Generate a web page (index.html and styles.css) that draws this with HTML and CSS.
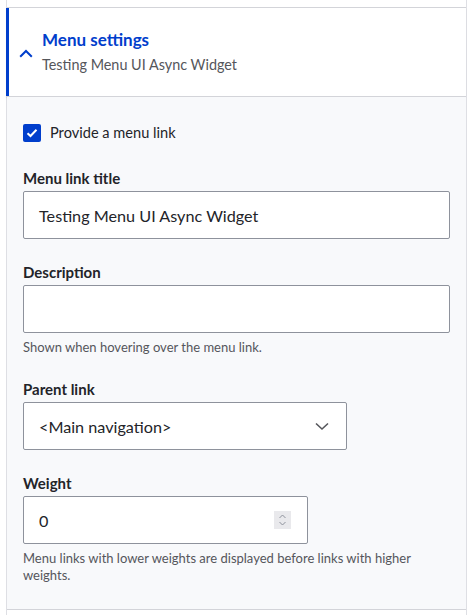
FILE: index.html
```html
<!DOCTYPE html>
<html lang="en">
<head>
<meta charset="utf-8">
<title>Menu settings</title>
<link rel="stylesheet" href="styles.css">
</head>
<body>
<div class="panel">
  <div class="prev"></div>
  <div class="details">
    <div class="summary">
      <svg class="chev" width="14" height="9" viewBox="0 0 14 9"><path d="M1.2 7.8 L7 2 L12.8 7.8" fill="none" stroke="#003ecc" stroke-width="2"/></svg>
      <div class="sum-text">
        <div class="sum-title">Menu settings</div>
        <div class="sum-sub">Testing Menu UI Async Widget</div>
      </div>
    </div>
    <div class="body">
      <div class="check-item">
        <span class="checkbox"><svg width="12" height="10" viewBox="0 0 12 10"><path d="M1.5 5.2 L4.5 8 L10.5 1.8" fill="none" stroke="#fff" stroke-width="2"/></svg></span>
        <span class="check-label">Provide a menu link</span>
      </div>
      <div class="item">
        <div class="label">Menu link title</div>
        <div class="input full">Testing Menu UI Async Widget</div>
      </div>
      <div class="item">
        <div class="label">Description</div>
        <div class="input full"></div>
        <div class="help">Shown when hovering over the menu link.</div>
      </div>
      <div class="item">
        <div class="label">Parent link</div>
        <div class="input select">
          <span>&lt;Main navigation&gt;</span>
          <svg width="14" height="9" viewBox="0 0 14 9"><path d="M1 1.5 L7 7 L13 1.5" fill="none" stroke="#55565b" stroke-width="1.6"/></svg>
        </div>
      </div>
      <div class="item">
        <div class="label">Weight</div>
        <div class="input number">
          <span>0</span>
          <span class="spin"><svg width="9" height="14" viewBox="0 0 9 14"><path d="M1.5 5 L4.5 2 L7.5 5 M1.5 9 L4.5 12 L7.5 9" fill="none" stroke="#8e929c" stroke-width="1"/></svg></span>
        </div>
        <div class="help">Menu links with lower weights are displayed before links with higher weights.</div>
      </div>
    </div>
  </div>
  <div class="next"></div>
</div>
</body>
</html>
```

FILE: styles.css
```css
html, body {
  margin: 0;
  padding: 0;
  background: #fff;
}
body {
  font-family: Lato, "Noto Sans", sans-serif;
  color: #232429;
}
.panel {
  margin: 0 8px 0 6px;
  border-left: 1px solid #dedfe4;
  border-right: 1px solid #dedfe4;
}
.prev {
  height: 7px;
  background: #fff;
}
.details {
  border-top: 1px solid #d3d4d9;
  border-bottom: 1px solid #d3d4d9;
}
.summary {
  margin-left: -1px;
  height: 88px;
  background: #fff;
  box-shadow: inset 3px 0 0 #003ecc, 0 1px 1px rgba(0, 0, 0, 0.06);
  border-bottom: 1px solid #d3d4d9;
  display: flex;
  align-items: center;
}
.chev {
  margin-left: 13px;
  margin-right: 9px;
  margin-top: 3px;
}
.sum-text {
  display: flex;
  flex-direction: column;
  gap: 6px;
}
.sum-title {
  font-size: 17px;
  font-weight: 700;
  color: #003ecc;
  line-height: 20px;
}
.sum-sub {
  font-size: 14.4px;
  color: #55565b;
  line-height: 18px;
}
.body {
  background: #f8f9fb;
  padding: 27px 16px 25px 16px;
}
.check-item {
  display: flex;
  align-items: center;
  height: 18px;
  margin-bottom: 27px;
}
.checkbox {
  width: 18px;
  height: 18px;
  background: #003ecc;
  border-radius: 2px;
  display: flex;
  align-items: center;
  justify-content: center;
  margin-right: 9px;
}
.check-label {
  font-size: 14.6px;
  line-height: 18px;
}
.item {
  margin-bottom: 24px;
}
.item:last-child {
  margin-bottom: 0;
}
.label {
  font-size: 15px;
  font-weight: 700;
  line-height: 18px;
  margin-bottom: 4px;
}
.input {
  box-sizing: border-box;
  height: 48px;
  border: 1px solid #8e929c;
  border-radius: 2px;
  background: #fff;
  font-size: 16.2px;
  padding: 0 15px;
  display: flex;
  align-items: center;
}
.full {
  width: 100%;
}
.select {
  width: 324px;
  justify-content: space-between;
  padding-right: 17px;
}
.number {
  width: 285px;
  justify-content: space-between;
  padding-right: 16px;
}
.spin {
  width: 17px;
  height: 18px;
  background: #e9e9ec;
  display: flex;
  align-items: center;
  justify-content: center;
}
.help {
  font-size: 13px;
  line-height: 17px;
  color: #55565b;
  margin-top: 6px;
}
.next {
  height: 6px;
  background: #fff;
}
```
